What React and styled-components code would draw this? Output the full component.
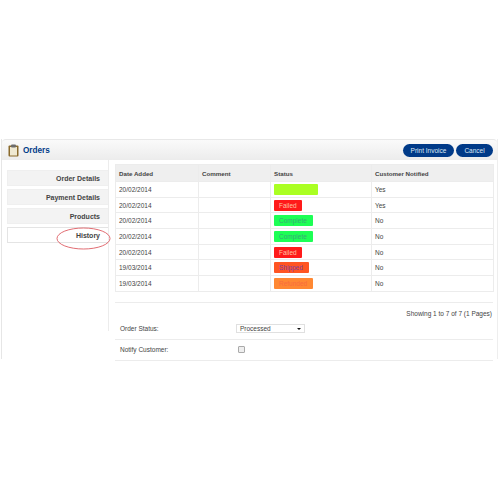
import styled, { createGlobalStyle } from "styled-components";

const GlobalStyle = createGlobalStyle`
  html, body {
    margin: 0;
    background: #ffffff;
    font-family: "Liberation Sans", Arial, sans-serif;
  }
`;

const Page = styled.div`
  width: 500px;
  height: 500px;
  padding: 139px 2px 0 1px;
  box-sizing: border-box;
  overflow: hidden;
`;
const Panel = styled.div`
  position: relative;
  height: 220px;
  border-left: 1px solid #e6e6e6;
  border-right: 1px solid #eeeeee;
`;
const Header = styled.div`
  height: 21px;
  display: flex;
  align-items: center;
  justify-content: space-between;
  padding: 0 4px 0 6px;
  background: linear-gradient(#fafafa, #ececec);
  border-top: 1px solid #e8e8e8;
  border-radius: 4px 4px 0 0;
  box-sizing: border-box;
`;
const TitleWrap = styled.div`
  display: flex;
  align-items: center;
  gap: 4px;
`;
const Title = styled.span`
  font-size: 8.2px;
  font-weight: 700;
  color: #003a88;
`;
const Buttons = styled.div`
  display: flex;
  gap: 2px;
`;
const Button = styled.button`
  height: 13px;
  width: ${(p) => p.$w}px;
  padding: 0;
  border: 0;
  border-radius: 7px;
  background: #003a88;
  color: #dfe8f5;
  font-family: inherit;
  font-size: 6.5px;
`;
const Body = styled.div`
  display: flex;
`;
const Sidebar = styled.div`
  width: 101px;
  margin-left: 5px;
  height: 161px;
  padding-top: 10px;
  display: flex;
  flex-direction: column;
  gap: 3px;
  border-right: 1px solid #ececec;
  box-sizing: content-box;
`;
const Tab = styled.div`
  height: 16px;
  padding-right: 8px;
  display: flex;
  align-items: center;
  justify-content: flex-end;
  font-size: 7px;
  font-weight: 700;
  color: #444444;
  background: ${(p) => (p.$active ? "#ffffff" : "#f3f3f3")};
  border: 1px solid ${(p) => (p.$active ? "#e4e4e4" : "#efefef")};
  border-right: 0;
  box-sizing: border-box;
`;
const Content = styled.div`
  width: 378px;
  margin-left: 6px;
  padding-top: 4px;
`;
const Table = styled.table`
  width: 378px;
  border-collapse: collapse;
  table-layout: fixed;
  font-size: 6.5px;
  color: #444444;
`;
const Th = styled.th`
  height: 16px;
  padding: 0 0 0 3px;
  text-align: left;
  font-size: 6.2px;
  font-weight: 700;
  background: #efefef;
  border: 1px solid #ececec;
`;
const Td = styled.td`
  height: 14.7px;
  padding: 0 0 0 3px;
  border: 1px solid #ececec;
`;
const Badge = styled.span`
  display: inline-block;
  box-sizing: border-box;
  width: ${(p) => p.$w}px;
  height: 11px;
  line-height: 11px;
  padding-left: 5px;
  vertical-align: middle;
  background: ${(p) => p.$bg};
  color: ${(p) => p.$fg};
  border-radius: 1px;
`;
const Pagination = styled.div`
  margin-top: 10px;
  padding: 7px 1px 0 0;
  border-top: 1px solid #ececec;
  height: 9px;
  text-align: right;
  font-size: 6.5px;
  color: #444444;
`;
const FormRow = styled.div`
  height: 20px;
  display: flex;
  align-items: center;
  padding-left: 5px;
  font-size: 6.5px;
  color: #444444;
  border-bottom: 1px solid #ececec;
`;
const FieldLabel = styled.div`
  width: 116px;
`;
const FakeSelect = styled.div`
  width: 69px;
  height: 9px;
  padding: 0 3px;
  display: flex;
  align-items: center;
  justify-content: space-between;
  box-sizing: border-box;
  border: 1px solid #e0e0e0;
`;
const Caret = styled.span`
  width: 0;
  height: 0;
  border: 2px solid transparent;
  border-top: 2.5px solid #111111;
  border-bottom: 0;
`;
const Check = styled.span`
  width: 7px;
  height: 7px;
  margin-left: 2px;
  box-sizing: border-box;
  border: 1px solid #aaaaaa;
  background: #eeeeee;
  border-radius: 1px;
`;
const Circle = styled.svg`
  position: absolute;
  left: 54px;
  top: 88px;
`;

const ClipboardIcon = () => (
  <svg width="11" height="13" viewBox="0 0 11 13">
    <rect x="0.5" y="1.5" width="10" height="11" rx="1" fill="#8a6a2c" />
    <rect x="2" y="3" width="7" height="8.5" fill="#efe9d2" />
    <rect x="3" y="0.5" width="5" height="3" rx="1" fill="#6c6c6c" />
  </svg>
);

const rows = [
  ["20/02/2014", { w: 44, bg: "#aaff22", fg: "#aaff22", label: "" }, "Yes"],
  ["20/02/2014", { w: 28, bg: "#ff1a1a", fg: "#ffc2a0", label: "Failed" }, "Yes"],
  ["20/02/2014", { w: 39, bg: "#1dff55", fg: "#3aa878", label: "Complete" }, "No"],
  ["20/02/2014", { w: 39, bg: "#1dff55", fg: "#3aa878", label: "Complete" }, "No"],
  ["20/02/2014", { w: 28, bg: "#ff1a1a", fg: "#ffc2a0", label: "Failed" }, "No"],
  ["19/03/2014", { w: 35, bg: "#ff5522", fg: "#8040a0", label: "Shipped" }, "No"],
  ["19/03/2014", { w: 39, bg: "#ff8833", fg: "#f96a3f", label: "Refunded" }, "No"],
];

export default function App() {
  return (
    <Page>
      <GlobalStyle />
      <Panel>
        <Header>
          <TitleWrap>
            <ClipboardIcon />
            <Title>Orders</Title>
          </TitleWrap>
          <Buttons>
            <Button $w={51}>Print Invoice</Button>
            <Button $w={37}>Cancel</Button>
          </Buttons>
        </Header>
        <Body>
          <Sidebar>
            <Tab>Order Details</Tab>
            <Tab>Payment Details</Tab>
            <Tab>Products</Tab>
            <Tab $active>History</Tab>
          </Sidebar>
          <Content>
            <Table>
              <colgroup>
                <col width="83" />
                <col width="72" />
                <col width="101" />
                <col width="122" />
              </colgroup>
              <thead>
                <tr>
                  <Th>Date Added</Th>
                  <Th>Comment</Th>
                  <Th>Status</Th>
                  <Th>Customer Notified</Th>
                </tr>
              </thead>
              <tbody>
                {rows.map(([date, status, notified], i) => (
                  <tr key={i}>
                    <Td>{date}</Td>
                    <Td />
                    <Td>
                      <Badge $w={status.w} $bg={status.bg} $fg={status.fg}>
                        {status.label}
                      </Badge>
                    </Td>
                    <Td>{notified}</Td>
                  </tr>
                ))}
              </tbody>
            </Table>
            <Pagination>Showing 1 to 7 of 7 (1 Pages)</Pagination>
            <FormRow>
              <FieldLabel>Order Status:</FieldLabel>
              <FakeSelect>
                Processed
                <Caret />
              </FakeSelect>
            </FormRow>
            <FormRow>
              <FieldLabel>Notify Customer:</FieldLabel>
              <Check />
            </FormRow>
          </Content>
        </Body>
        <Circle width="55" height="23" viewBox="0 0 55 23">
          <ellipse cx="27.5" cy="11.5" rx="26.5" ry="10.5" fill="none" stroke="#d9474f" strokeWidth="0.8" />
        </Circle>
      </Panel>
    </Page>
  );
}
